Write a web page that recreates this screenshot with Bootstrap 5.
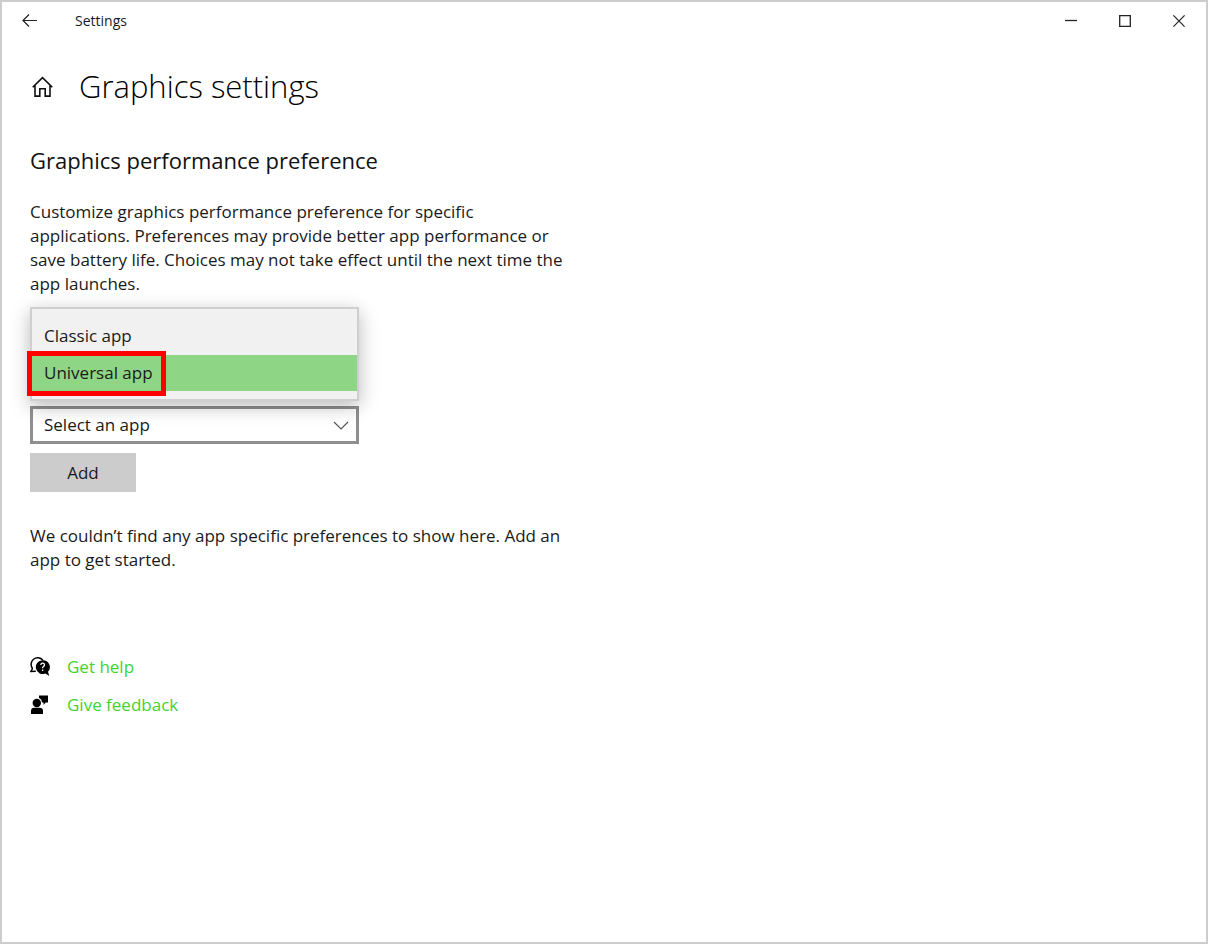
<!DOCTYPE html>
<html lang="en">
<head>
<meta charset="utf-8">
<meta name="viewport" content="width=device-width, initial-scale=1">
<title>Settings</title>
<link href="https://cdn.jsdelivr.net/npm/bootstrap@5.3.0/dist/css/bootstrap.min.css" rel="stylesheet">
<style>
  body { font-family: "Open Sans", "Noto Sans", sans-serif; font-size: 17px; line-height: 24px; color: #1a1a1a; background: #fff; }
  .app-window { border: 2px solid #cdcdcd; }
  .title-bar { height: 37px; padding-left: 20px; }
  .title-text { font-size: 14px; line-height: 20px; margin-left: 37px; }
  .bar-btn { border: 0; background: none; padding: 0; color: #222; display: flex; align-items: center; justify-content: center; }
  .caption-btn { width: 54px; height: 37px; }
  .page-body { padding: 21px 28px 40px; }
  .home-btn { margin-left: 2px; margin-right: 26px; }
  h1 { font-size: 31px; line-height: 52px; font-weight: 350; color: #000; }
  h2 { font-size: 22px; line-height: 32px; font-weight: 400; color: #111; }
  .text-column { max-width: 540px; }
  .picker { max-width: 329px; }
  .app-menu { background: #f1f1f1; border: 2px solid #cfcfcf; padding: 8px 0; margin-bottom: 5px; box-shadow: 0 5px 18px rgba(0,0,0,.28); z-index: 1; }
  .app-option { border: 0; background: none; color: #1a1a1a; text-align: left; padding: 0 12px; height: 38px; }
  .app-option.chosen { background: #8fd586; height: 36px; }
  .highlight-box { border: 5px solid #f00; left: -5px; top: -4px; bottom: -5px; width: 139px; }
  .app-select { appearance: none; border: 3px solid #8f8f8f; border-radius: 0; background: #fff; color: #1a1a1a; height: 38px; padding: 0 11px; }
  .chevron { right: 10px; top: 15px; pointer-events: none; }
  .add-btn { width: 106px; height: 39px; border: 0; background: #ccc; color: #1a1a1a; margin-top: 9px; }
  .intro-text { margin-bottom: 11px; }
  .help-links { margin-top: 83px; gap: 14px; }
  .help-link { color: #42d32e; text-decoration: none; }
</style>
</head>
<body>
<div class="app-window min-vh-100">
  <header class="title-bar d-flex align-items-center">
    <button class="bar-btn" aria-label="Back">
      <svg width="16" height="14" viewBox="0 0 16 14" fill="none" stroke="currentColor" stroke-width="1.2"><path d="M15 6.500H1M7 .5l-6 6 6 6"/></svg>
    </button>
    <span class="title-text">Settings</span>
    <div class="d-flex ms-auto">
      <button class="bar-btn caption-btn" aria-label="Minimize"><svg width="12" height="12" viewBox="0 0 12 12"><path d="M0 5.5h12" stroke="currentColor" stroke-width="1.3"/></svg></button>
      <button class="bar-btn caption-btn" aria-label="Maximize"><svg width="12" height="12" viewBox="0 0 12 12"><path d="M.7.7h10.6v10.6H.7z" fill="none" stroke="currentColor" stroke-width="1.3"/></svg></button>
      <button class="bar-btn caption-btn" aria-label="Close"><svg width="12" height="12" viewBox="0 0 12 12"><path d="M.4.4l11.2 11.2M11.6.4L.4 11.6" stroke="currentColor" stroke-width="1.2"/></svg></button>
    </div>
  </header>
  <main class="page-body">
    <div class="d-flex align-items-center">
      <button class="bar-btn home-btn" aria-label="Home">
        <svg width="21" height="22" viewBox="0 0 21 22" fill="none" stroke="#111" stroke-width="1.6"><path d="M.7 12.300L10.500 2.600l9.800 9.700M3 10.300v10.800h4.800v-7.400h5.400v7.400H18V10.300"/></svg>
      </button>
      <h1 class="m-0">Graphics settings</h1>
    </div>
    <h2 class="mt-4 pt-2 mb-4">Graphics performance preference</h2>
    <p class="text-column intro-text">Customize graphics performance preference for specific applications. Preferences may provide better app performance or save battery life. Choices may not take effect until the next time the app launches.</p>
    <div class="picker">
      <div class="app-menu position-relative" role="listbox" aria-label="App type">
        <button class="app-option d-block w-100" role="option" aria-selected="false">Classic app</button>
        <button class="app-option chosen d-block w-100 position-relative" role="option" aria-selected="true">Universal app<span class="highlight-box position-absolute"></span></button>
      </div>
      <div class="position-relative">
        <select class="app-select w-100 d-block" aria-label="Select an app"><option>Select an app</option></select>
        <svg class="chevron position-absolute" width="16" height="10" viewBox="0 0 16 10" fill="none" stroke="#555" stroke-width="1.2"><path d="M1 1l7 7 7-7"/></svg>
      </div>
    </div>
    <button class="add-btn">Add</button>
    <p class="text-column mt-4 pt-2 mb-0">We couldn’t find any app specific preferences to show here. Add an app to get started.</p>
    <div class="help-links d-grid">
      <div class="d-flex align-items-center gap-3">
        <svg width="21" height="20" viewBox="0 0 21 20"><path d="M2.600 11.500A6.300 6.300 0 1 1 12.800 3.200M2.600 11.300L.8 14.500l5-.3" fill="none" stroke="#000" stroke-width="1.500"/><path d="M12.600 3.200a6.900 6.900 0 1 0 2.700 13.300l4 2.500-1.300-4.200A6.900 6.900 0 0 0 12.600 3.200z"/><path d="M10.800 8q.2-1.800 1.900-1.800t1.800 1.600q0 1-1 1.700t-.9 1.700M12.600 12.500V14" fill="none" stroke="#fff" stroke-width="1.300"/></svg>
        <a class="help-link" href="#">Get help</a>
      </div>
      <div class="d-flex align-items-center gap-3">
        <svg width="21" height="20" viewBox="0 0 21 20"><circle cx="6.800" cy="8" r="4.200"/><path d="M1 19v-3Q1 12.800 4.500 12.800h5q3.500 0 3.500 3.200v3zM9 .5h9v7h-2.300L13.500 10V7.500H12Q11.800 4 9 3z"/></svg>
        <a class="help-link" href="#">Give feedback</a>
      </div>
    </div>
  </main>
</div>
<script src="https://cdn.jsdelivr.net/npm/bootstrap@5.3.0/dist/js/bootstrap.bundle.min.js"></script>
</body>
</html>
